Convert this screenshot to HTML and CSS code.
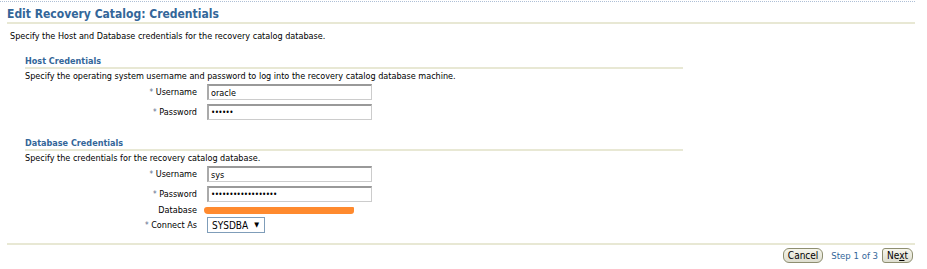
FILE: index.html
```html
<!DOCTYPE html>
<html>
<head>
<meta charset="utf-8">
<link rel="stylesheet" href="styles.css">
</head>
<body>
<div class="dots"></div>
<h1 class="title">Edit Recovery Catalog: Credentials</h1>
<p class="intro">Specify the Host and Database credentials for the recovery catalog database.</p>

<div class="section host">
  <h2 class="sec-head">Host Credentials</h2>
  <p class="sec-desc">Specify the operating system username and password to log into the recovery catalog database machine.</p>
  <div class="form">
    <div class="row"><label class="lbl"><span class="req">*</span> Username</label><input class="field" type="text" value="oracle"></div>
    <div class="row"><label class="lbl"><span class="req">*</span> Password</label><input class="field pw" type="password" value="oracle"></div>
  </div>
</div>

<div class="section db">
  <h2 class="sec-head">Database Credentials</h2>
  <p class="sec-desc">Specify the credentials for the recovery catalog database.</p>
  <div class="form">
    <div class="row"><label class="lbl"><span class="req">*</span> Username</label><input class="field" type="text" value="sys"></div>
    <div class="row"><label class="lbl"><span class="req">*</span> Password</label><input class="field pw" type="password" value="abcdefghijklmnopqr"></div>
    <div class="row short"><label class="lbl">Database</label><span class="redact"></span></div>
    <div class="row sel"><label class="lbl"><span class="req">*</span> Connect As</label><span class="select">SYSDBA <span class="arrow">&#9660;</span></span></div>
  </div>
</div>

<div class="footer">
  <span class="btn">Cancel</span>
  <span class="step">Step 1 of 3</span>
  <span class="btn next">Ne<u>x</u>t</span>
</div>
</body>
</html>
```

FILE: styles.css
```css
html, body {
  margin: 0;
  padding: 0;
  background: #fff;
}
body {
  width: 927px;
  height: 269px;
  overflow: hidden;
  font-family: "DejaVu Sans Condensed", "DejaVu Sans", sans-serif;
  font-size: 9px;
  color: #000;
}
.dots {
  margin: 1px 12px 0 0;
  border-top: 1px dotted #aebfd6;
}
.title {
  margin: 5px 12px 0 7px;
  padding: 0;
  font-family: "DejaVu Sans Condensed", "DejaVu Sans", sans-serif;
  font-size: 12px;
  line-height: 15px;
  font-weight: bold;
  color: #336699;
  border-bottom: 2px solid #e8e8d4;
}
.intro {
  margin: 6px 0 0 10px;
  line-height: 12px;
}
.section {
  margin-left: 25px;
}
.host { margin-top: 13px; }
.db { margin-top: 15px; }
.sec-head {
  margin: 0;
  width: 658px;
  font-size: 9px;
  font-weight: bold;
  line-height: 12px;
  color: #336699;
  border-bottom: 2px solid #e8e8d4;
}
.sec-desc {
  margin: 1px 0 0 0;
  line-height: 12px;
}
.form {
  display: flex;
  flex-direction: column;
}
.row {
  display: flex;
  align-items: center;
  height: 20px;
  gap: 10px;
}
.row.short { height: 12px; }
.row.sel { height: 18px; }
.lbl {
  width: 172px;
  text-align: right;
  color: #000;
}
.req {
  color: #5a6e8c;
  font-size: 8px;
}
.field {
  box-sizing: border-box;
  width: 165px;
  height: 16px;
  margin: 0;
  padding: 0 2px;
  font-family: "DejaVu Sans Condensed", "DejaVu Sans", sans-serif;
  font-size: 9px;
  border: 1px solid #ccc;
  border-top: 2px solid #999;
  border-left: 2px solid #aaa;
  background: #fff;
  color: #000;
  outline: none;
}
.field.pw {
  font-size: 8px;
  letter-spacing: -0.6px;
}
.redact {
  display: block;
  width: 150px;
  height: 7px;
  margin-left: -3px;
  background: #ff8a2e;
  border-radius: 3px 1px 3px 4px;
}
.select {
  box-sizing: border-box;
  display: flex;
  align-items: center;
  justify-content: space-between;
  width: 58px;
  height: 16px;
  padding: 0 5px 0 4px;
  border: 1px solid #7f9db9;
  font-size: 10px;
  background: #fff;
}
.arrow {
  font-size: 7px;
}
.footer {
  margin: 9px 12px 0 7px;
  padding-top: 3px;
  border-top: 2px solid #e8e8d4;
  display: flex;
  justify-content: flex-end;
  align-items: center;
  gap: 8px;
}
.btn {
  display: inline-block;
  padding: 0 4px;
  height: 13px;
  line-height: 13px;
  border: 1px solid #8e8e70;
  border-radius: 6px;
  background: linear-gradient(#f6f6ec, #deded0);
  font-size: 10px;
  color: #000;
}
.next {
  margin-left: -4px;
  margin-right: 2px;
  border-radius: 3px 6px 6px 3px;
}
.next u { text-decoration: underline; }
.step {
  color: #336699;
  font-size: 9.5px;
}
```
